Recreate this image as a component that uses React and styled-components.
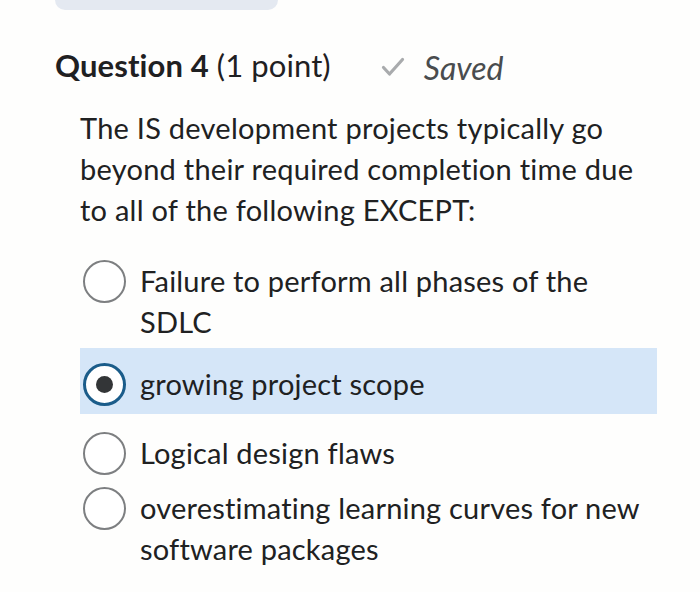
import React from 'react'
import styled, { createGlobalStyle } from 'styled-components'

const Global = createGlobalStyle`
  body {
    margin: 0;
    background: #fefefd;
    font-family: Lato, "Open Sans", sans-serif;
    color: #202122;
  }
`

const options = [
  { text: 'Failure to perform all phases of the SDLC' },
  { text: 'growing project scope', selected: true },
  { text: 'Logical design flaws' },
  { text: 'overestimating learning curves for new software packages' },
]

const App = () => {
  return (
    <Page>
      <Global />
      <TopTab />
      <Header>
        <Title><b>Question 4</b> (1 point)</Title>
        <SavedTag>
          <svg width="24" height="20" viewBox="0 0 24 20">
            <path d="M2.5 10.5 L8.5 17 L21.5 2.5" fill="none" stroke="#a9abad" strokeWidth="3.2" strokeLinecap="round" strokeLinejoin="round" />
          </svg>
          <span>Saved</span>
        </SavedTag>
      </Header>
      <Body>
        <Prompt>
          The IS development projects typically go beyond their required completion time due to all of the following EXCEPT:
        </Prompt>
        <OptionList>
          {options.map((o, i) => (
            <Option key={i} $selected={o.selected}>
              <Radio $selected={o.selected} />
              <OptionText>{o.text}</OptionText>
            </Option>
          ))}
        </OptionList>
      </Body>
    </Page>
  )
}

export default App

const Page = styled.div`
  width: 700px;
  height: 592px;
  padding-left: 55px;
  box-sizing: border-box;
  overflow: hidden;
`

const TopTab = styled.div`
  width: 223px;
  height: 10px;
  background: #e4e9f1;
  border-radius: 0 0 10px 10px;
`

const Header = styled.div`
  display: flex;
  align-items: baseline;
  gap: 50px;
  margin-top: 36px;
  height: 44px;
`

const Title = styled.h2`
  margin: 0;
  font-size: 31px;
  font-weight: 400;
  letter-spacing: 0.1px;
  color: #1f2022;
  b {
    font-weight: 700;
  }
`

const SavedTag = styled.div`
  display: flex;
  align-items: center;
  gap: 19px;
  font-size: 32px;
  font-style: italic;
  color: #494c4e;
  svg {
    position: relative;
    top: 0px;
  }
`

const Body = styled.div`
  padding-left: 25px;
  width: 565px;
`

const Prompt = styled.p`
  margin: 17px 0 0;
  font-size: 29px;
  letter-spacing: 0.25px;
  line-height: 41px;
`

const OptionList = styled.div`
  margin-top: 24px;
  display: flex;
  flex-direction: column;
`

const Option = styled.div`
  display: flex;
  align-items: flex-start;
  gap: 14px;
  width: 577px;
  padding: ${p => (p.$selected ? '15px 0 8px' : '6px 0')};
  margin: ${p => (p.$selected ? '0 0 12px' : '0')};
  background: ${p => (p.$selected ? '#d5e6f8' : 'transparent')};
`

const Radio = styled.span`
  flex: none;
  width: 43px;
  height: 43px;
  box-sizing: border-box;
  margin-top: 0;
  margin-left: 3px;
  border-radius: 50%;
  border: ${p => (p.$selected ? '3px solid #1a5c8a' : '2px solid #7d7f81')};
  background: #fff;
  display: flex;
  align-items: center;
  justify-content: center;
  &::after {
    content: '';
    display: ${p => (p.$selected ? 'block' : 'none')};
    width: 17px;
    height: 17px;
    border-radius: 50%;
    background: #333537;
  }
`

const OptionText = styled.div`
  font-size: 29px;
  letter-spacing: 0.2px;
  line-height: 41px;
  color: #202122;
  max-width: 505px;
`
